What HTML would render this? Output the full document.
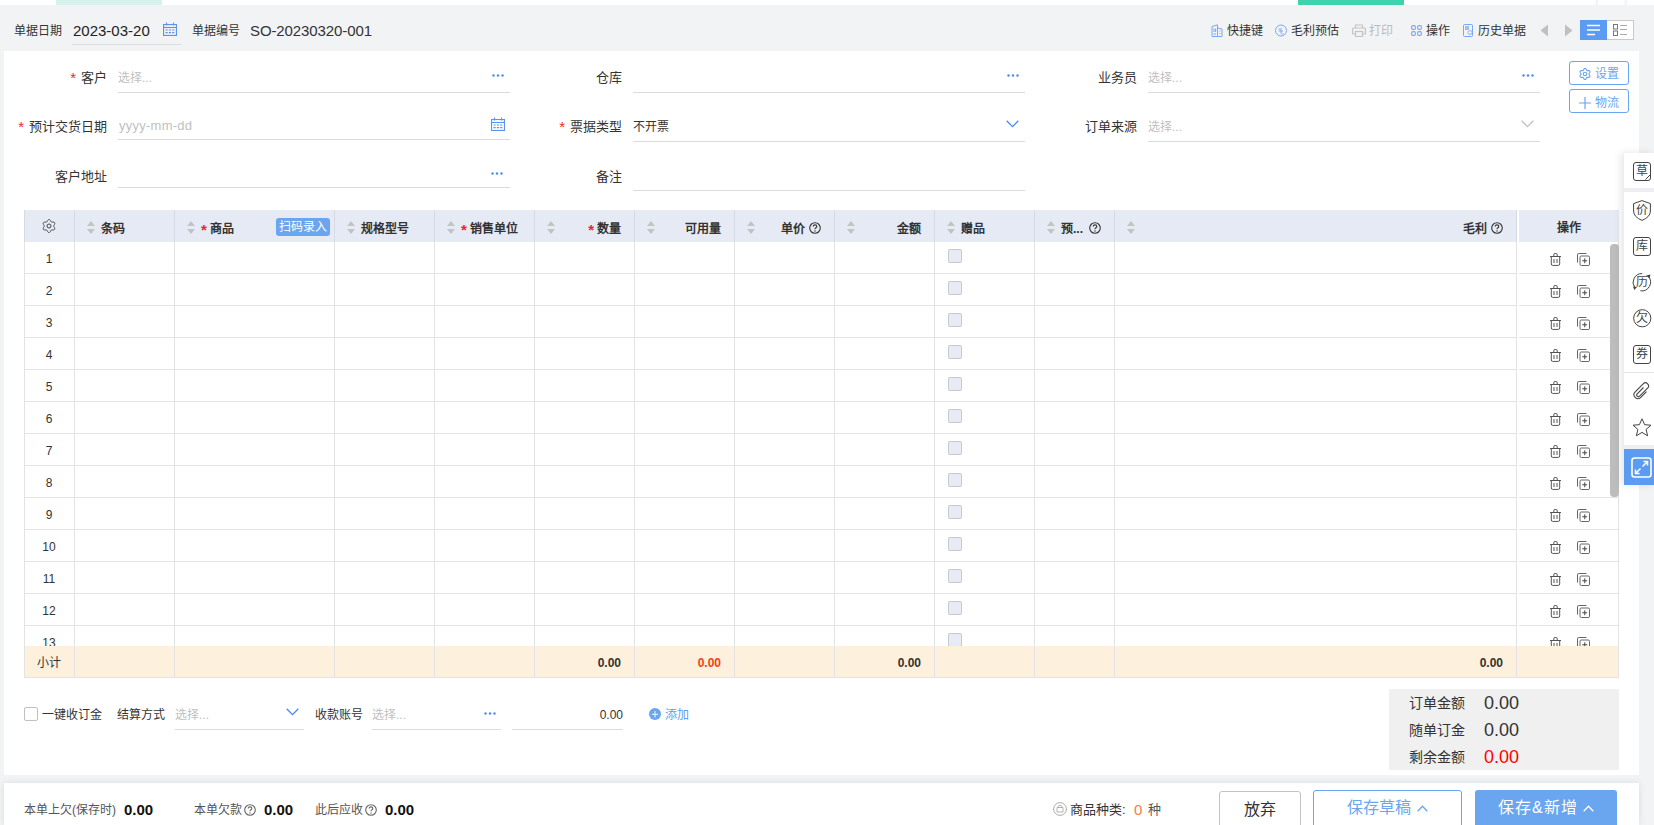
<!DOCTYPE html><html lang="zh-CN"><head><meta charset="utf-8"><style>
*{box-sizing:border-box;margin:0;padding:0}
html,body{width:1654px;height:825px;overflow:hidden}
body{background:#f2f3f5;font-family:"Liberation Sans",sans-serif;font-size:12px;color:#333;position:relative}
.a{position:absolute;white-space:nowrap}
.lbl{font-size:12px;color:#333;line-height:16px}
.r{text-align:right}
.req{color:#f5222d;margin-right:5px;font-size:15px;vertical-align:-1px}
.ph{color:#bfbfbf;font-size:12px;line-height:16px}
.ul{height:1px;background:#dcdcdc}
.tb{font-size:12px;color:#333;line-height:16px}
.hd{font-size:12px;font-weight:bold;color:#333;line-height:16px}
.cell{font-size:12px;color:#333;line-height:16px}
</style></head><body>
<div class="a " style="left:0px;top:0px;width:1654px;height:5px;background:#fff"></div>
<div class="a " style="left:56px;top:0px;width:106px;height:5px;background:#d5f3ec"></div>
<div class="a " style="left:1298px;top:0px;width:106px;height:5px;background:#3dd3ad"></div>
<div class="a " style="left:1594px;top:0px;width:4px;height:5px;background:linear-gradient(to right,rgba(0,0,0,0),rgba(0,0,0,0.06))"></div>
<div class="a " style="left:1623px;top:0px;width:4px;height:5px;background:linear-gradient(to right,rgba(0,0,0,0),rgba(0,0,0,0.06))"></div>
<div class="a lbl" style="left:14px;top:23px;">单据日期</div>
<div class="a " style="left:73px;top:21px;font-size:15px;line-height:20px;color:#222">2023-03-20</div>
<div class="a ul" style="left:72px;top:44px;width:109px;height:1px;"></div>
<svg class="a" style="left:163px;top:22px" width="14" height="14" viewBox="0 0 14 14"><g fill="none" stroke="#5a93ee" stroke-width="1.1"><rect x="0.55" y="2.55" width="12.9" height="10.9"/><line x1="0.5" y1="5.5" x2="13.5" y2="5.5"/><line x1="3.5" y1="0.5" x2="3.5" y2="3.5"/><line x1="10.5" y1="0.5" x2="10.5" y2="3.5"/><line x1="2.5" y1="8" x2="11.5" y2="8" stroke-dasharray="2.2 1.1"/><line x1="2.5" y1="10.6" x2="11.5" y2="10.6" stroke-dasharray="2.2 1.1"/></g></svg>
<div class="a lbl" style="left:192px;top:23px;">单据编号</div>
<div class="a " style="left:250px;top:21px;font-size:15px;line-height:20px;color:#333;letter-spacing:-0.1px">SO-20230320-001</div>
<div class="a tb" style="left:1227px;top:23px;">快捷键</div>
<div class="a tb" style="left:1291px;top:23px;">毛利预估</div>
<div class="a tb" style="left:1369px;top:23px;color:#bbb">打印</div>
<div class="a tb" style="left:1426px;top:23px;">操作</div>
<div class="a tb" style="left:1478px;top:23px;">历史单据</div>
<div class="a " style="left:1580px;top:20px;width:54px;height:20px;border:1px solid #c8c8c8;background:#fff"></div>
<div class="a " style="left:1580px;top:20px;width:27px;height:20px;background:#5b9cf2"></div>
<div class="a " style="left:4px;top:51px;width:1635px;height:724px;background:#fff"></div>
<div class="a lbl r" style="left:-93px;top:69px;width:200px;font-size:13px;line-height:17px"><span class="req">*</span>客户</div>
<div class="a ph" style="left:118px;top:70px;">选择...</div>
<div class="a ul" style="left:118px;top:92px;width:392px;height:1px;"></div>
<div class="a lbl r" style="left:422px;top:69px;width:200px;font-size:13px;line-height:17px">仓库</div>
<div class="a ul" style="left:633px;top:92px;width:392px;height:1px;"></div>
<div class="a lbl r" style="left:937px;top:69px;width:200px;font-size:13px;line-height:17px">业务员</div>
<div class="a ph" style="left:1148px;top:70px;">选择...</div>
<div class="a ul" style="left:1148px;top:92px;width:392px;height:1px;"></div>
<div class="a lbl r" style="left:-93px;top:118px;width:200px;font-size:13px;line-height:17px"><span class="req">*</span>预计交货日期</div>
<div class="a ph" style="left:119px;top:117px;font-size:13px;line-height:17px;letter-spacing:0.25px">yyyy-mm-dd</div>
<div class="a ul" style="left:118px;top:139px;width:392px;height:1px;"></div>
<div class="a lbl r" style="left:422px;top:118px;width:200px;font-size:13px;line-height:17px"><span class="req">*</span>票据类型</div>
<div class="a lbl" style="left:633px;top:119px;">不开票</div>
<div class="a ul" style="left:633px;top:141px;width:392px;height:1px;"></div>
<div class="a lbl r" style="left:937px;top:118px;width:200px;font-size:13px;line-height:17px">订单来源</div>
<div class="a ph" style="left:1148px;top:119px;">选择...</div>
<div class="a ul" style="left:1148px;top:141px;width:392px;height:1px;"></div>
<div class="a lbl r" style="left:-93px;top:168px;width:200px;font-size:13px;line-height:17px">客户地址</div>
<div class="a ul" style="left:118px;top:187px;width:392px;height:1px;"></div>
<div class="a lbl r" style="left:422px;top:168px;width:200px;font-size:13px;line-height:17px">备注</div>
<div class="a ul" style="left:633px;top:190px;width:392px;height:1px;"></div>
<svg class="a" style="left:492px;top:74px" width="12" height="3" viewBox="0 0 12 3"><g fill="#4a8af4"><circle cx="1.5" cy="1.5" r="1.2"/><circle cx="6" cy="1.5" r="1.2"/><circle cx="10.5" cy="1.5" r="1.2"/></g></svg>
<svg class="a" style="left:1007px;top:74px" width="12" height="3" viewBox="0 0 12 3"><g fill="#4a8af4"><circle cx="1.5" cy="1.5" r="1.2"/><circle cx="6" cy="1.5" r="1.2"/><circle cx="10.5" cy="1.5" r="1.2"/></g></svg>
<svg class="a" style="left:1522px;top:74px" width="12" height="3" viewBox="0 0 12 3"><g fill="#4a8af4"><circle cx="1.5" cy="1.5" r="1.2"/><circle cx="6" cy="1.5" r="1.2"/><circle cx="10.5" cy="1.5" r="1.2"/></g></svg>
<svg class="a" style="left:491px;top:172px" width="12" height="3" viewBox="0 0 12 3"><g fill="#4a8af4"><circle cx="1.5" cy="1.5" r="1.2"/><circle cx="6" cy="1.5" r="1.2"/><circle cx="10.5" cy="1.5" r="1.2"/></g></svg>
<svg class="a" style="left:491px;top:117px" width="14" height="14" viewBox="0 0 14 14"><g fill="none" stroke="#5a93ee" stroke-width="1.1"><rect x="0.55" y="2.55" width="12.9" height="10.9"/><line x1="0.5" y1="5.5" x2="13.5" y2="5.5"/><line x1="3.5" y1="0.5" x2="3.5" y2="3.5"/><line x1="10.5" y1="0.5" x2="10.5" y2="3.5"/><line x1="2.5" y1="8" x2="11.5" y2="8" stroke-dasharray="2.2 1.1"/><line x1="2.5" y1="10.6" x2="11.5" y2="10.6" stroke-dasharray="2.2 1.1"/></g></svg>
<svg class="a" style="left:1006px;top:120px" width="13" height="8" viewBox="0 0 13 8"><polyline points="0.7,0.7 6.5,6.6 12.3,0.7" fill="none" stroke="#4a8af4" stroke-width="1.3"/></svg>
<svg class="a" style="left:1521px;top:120px" width="13" height="8" viewBox="0 0 13 8"><polyline points="0.7,0.7 6.5,6.6 12.3,0.7" fill="none" stroke="#c0c0c0" stroke-width="1.3"/></svg>
<div class="a " style="left:1569px;top:61px;width:60px;height:24px;border:1px solid #6aa5f0;border-radius:3px"></div>
<div class="a " style="left:1569px;top:89px;width:60px;height:24px;border:1px solid #6aa5f0;border-radius:3px"></div>
<div class="a " style="left:24px;top:210px;width:1492px;height:32px;background:#e6eaf4"></div>
<div class="a " style="left:1519px;top:210px;width:100px;height:32px;background:#e6eaf4"></div>
<div class="a " style="left:24px;top:646px;width:1595px;height:32px;background:#fdf0dc"></div>
<div class="a " style="left:24px;top:273px;width:1492px;height:1px;background:#e3e3e3"></div>
<div class="a " style="left:1519px;top:273px;width:100px;height:1px;background:#e3e3e3"></div>
<div class="a " style="left:24px;top:305px;width:1492px;height:1px;background:#e3e3e3"></div>
<div class="a " style="left:1519px;top:305px;width:100px;height:1px;background:#e3e3e3"></div>
<div class="a " style="left:24px;top:337px;width:1492px;height:1px;background:#e3e3e3"></div>
<div class="a " style="left:1519px;top:337px;width:100px;height:1px;background:#e3e3e3"></div>
<div class="a " style="left:24px;top:369px;width:1492px;height:1px;background:#e3e3e3"></div>
<div class="a " style="left:1519px;top:369px;width:100px;height:1px;background:#e3e3e3"></div>
<div class="a " style="left:24px;top:401px;width:1492px;height:1px;background:#e3e3e3"></div>
<div class="a " style="left:1519px;top:401px;width:100px;height:1px;background:#e3e3e3"></div>
<div class="a " style="left:24px;top:433px;width:1492px;height:1px;background:#e3e3e3"></div>
<div class="a " style="left:1519px;top:433px;width:100px;height:1px;background:#e3e3e3"></div>
<div class="a " style="left:24px;top:465px;width:1492px;height:1px;background:#e3e3e3"></div>
<div class="a " style="left:1519px;top:465px;width:100px;height:1px;background:#e3e3e3"></div>
<div class="a " style="left:24px;top:497px;width:1492px;height:1px;background:#e3e3e3"></div>
<div class="a " style="left:1519px;top:497px;width:100px;height:1px;background:#e3e3e3"></div>
<div class="a " style="left:24px;top:529px;width:1492px;height:1px;background:#e3e3e3"></div>
<div class="a " style="left:1519px;top:529px;width:100px;height:1px;background:#e3e3e3"></div>
<div class="a " style="left:24px;top:561px;width:1492px;height:1px;background:#e3e3e3"></div>
<div class="a " style="left:1519px;top:561px;width:100px;height:1px;background:#e3e3e3"></div>
<div class="a " style="left:24px;top:593px;width:1492px;height:1px;background:#e3e3e3"></div>
<div class="a " style="left:1519px;top:593px;width:100px;height:1px;background:#e3e3e3"></div>
<div class="a " style="left:24px;top:625px;width:1492px;height:1px;background:#e3e3e3"></div>
<div class="a " style="left:1519px;top:625px;width:100px;height:1px;background:#e3e3e3"></div>
<div class="a " style="left:24px;top:677px;width:1595px;height:1px;background:#e3e3e3"></div>
<div class="a " style="left:24px;top:210px;width:1px;height:468px;background:#e3e3e3"></div>
<div class="a " style="left:74px;top:210px;width:1px;height:468px;background:#e3e3e3"></div>
<div class="a " style="left:174px;top:210px;width:1px;height:468px;background:#e3e3e3"></div>
<div class="a " style="left:334px;top:210px;width:1px;height:468px;background:#e3e3e3"></div>
<div class="a " style="left:434px;top:210px;width:1px;height:468px;background:#e3e3e3"></div>
<div class="a " style="left:534px;top:210px;width:1px;height:468px;background:#e3e3e3"></div>
<div class="a " style="left:634px;top:210px;width:1px;height:468px;background:#e3e3e3"></div>
<div class="a " style="left:734px;top:210px;width:1px;height:468px;background:#e3e3e3"></div>
<div class="a " style="left:834px;top:210px;width:1px;height:468px;background:#e3e3e3"></div>
<div class="a " style="left:934px;top:210px;width:1px;height:468px;background:#e3e3e3"></div>
<div class="a " style="left:1034px;top:210px;width:1px;height:468px;background:#e3e3e3"></div>
<div class="a " style="left:1114px;top:210px;width:1px;height:468px;background:#e3e3e3"></div>
<div class="a " style="left:1516px;top:210px;width:1px;height:468px;background:#e3e3e3"></div>
<div class="a " style="left:74px;top:210px;width:1px;height:32px;background:#d6dae3"></div>
<div class="a " style="left:174px;top:210px;width:1px;height:32px;background:#d6dae3"></div>
<div class="a " style="left:334px;top:210px;width:1px;height:32px;background:#d6dae3"></div>
<div class="a " style="left:434px;top:210px;width:1px;height:32px;background:#d6dae3"></div>
<div class="a " style="left:534px;top:210px;width:1px;height:32px;background:#d6dae3"></div>
<div class="a " style="left:634px;top:210px;width:1px;height:32px;background:#d6dae3"></div>
<div class="a " style="left:734px;top:210px;width:1px;height:32px;background:#d6dae3"></div>
<div class="a " style="left:834px;top:210px;width:1px;height:32px;background:#d6dae3"></div>
<div class="a " style="left:934px;top:210px;width:1px;height:32px;background:#d6dae3"></div>
<div class="a " style="left:1034px;top:210px;width:1px;height:32px;background:#d6dae3"></div>
<div class="a " style="left:1114px;top:210px;width:1px;height:32px;background:#d6dae3"></div>
<div class="a " style="left:1516px;top:210px;width:1px;height:32px;background:#d6dae3"></div>
<div class="a " style="left:24px;top:210px;width:1px;height:32px;background:#d6dae3"></div>
<svg class="a" style="left:42px;top:219px" width="14" height="14" viewBox="0 0 14 14"><g fill="none" stroke="#444" stroke-width="1"><path d="M7.00 0.45 L7.34 0.51 L7.67 0.67 L7.96 0.92 L8.23 1.24 L8.45 1.59 L8.64 1.95 L8.81 2.29 L8.97 2.59 L9.13 2.82 L9.32 2.97 L9.56 3.06 L9.84 3.09 L10.17 3.08 L10.55 3.06 L10.96 3.04 L11.38 3.06 L11.79 3.12 L12.15 3.26 L12.45 3.46 L12.67 3.73 L12.79 4.05 L12.82 4.41 L12.75 4.79 L12.61 5.18 L12.41 5.55 L12.19 5.90 L11.98 6.21 L11.80 6.49 L11.69 6.75 L11.65 7.00 L11.69 7.25 L11.80 7.51 L11.98 7.79 L12.19 8.10 L12.41 8.45 L12.61 8.82 L12.75 9.21 L12.82 9.59 L12.79 9.95 L12.67 10.27 L12.45 10.54 L12.15 10.74 L11.79 10.88 L11.38 10.94 L10.96 10.96 L10.55 10.94 L10.17 10.92 L9.84 10.91 L9.56 10.94 L9.32 11.03 L9.13 11.18 L8.97 11.41 L8.81 11.71 L8.64 12.05 L8.45 12.41 L8.23 12.76 L7.96 13.08 L7.67 13.33 L7.34 13.49 L7.00 13.55 L6.66 13.49 L6.33 13.33 L6.04 13.08 L5.77 12.76 L5.55 12.41 L5.36 12.05 L5.19 11.71 L5.03 11.41 L4.87 11.18 L4.68 11.03 L4.44 10.94 L4.16 10.91 L3.83 10.92 L3.45 10.94 L3.04 10.96 L2.62 10.94 L2.21 10.88 L1.85 10.74 L1.55 10.54 L1.33 10.28 L1.21 9.95 L1.18 9.59 L1.25 9.21 L1.39 8.82 L1.59 8.45 L1.81 8.10 L2.02 7.79 L2.20 7.51 L2.31 7.25 L2.35 7.00 L2.31 6.75 L2.20 6.49 L2.02 6.21 L1.81 5.90 L1.59 5.55 L1.39 5.18 L1.25 4.79 L1.18 4.41 L1.21 4.05 L1.33 3.72 L1.55 3.46 L1.85 3.26 L2.21 3.12 L2.62 3.06 L3.04 3.04 L3.45 3.06 L3.83 3.08 L4.16 3.09 L4.44 3.06 L4.68 2.97 L4.87 2.82 L5.03 2.59 L5.19 2.29 L5.36 1.95 L5.55 1.59 L5.77 1.24 L6.04 0.92 L6.33 0.67 L6.66 0.51 L7.00 0.45Z"/><circle cx="7" cy="7" r="2"/></g></svg>
<svg class="a" style="left:87px;top:221px" width="8" height="13" viewBox="0 0 8 13"><g fill="#c3c3c3"><polygon points="4,0 8,5 0,5"/><polygon points="0,8 8,8 4,13"/></g></svg>
<div class="a hd" style="left:101px;top:221px;">条码</div>
<svg class="a" style="left:187px;top:221px" width="8" height="13" viewBox="0 0 8 13"><g fill="#c3c3c3"><polygon points="4,0 8,5 0,5"/><polygon points="0,8 8,8 4,13"/></g></svg>
<div class="a hd" style="left:201px;top:221px;"><span style="color:#f5222d;margin-right:3px;font-size:15px;vertical-align:-2px">*</span>商品</div>
<svg class="a" style="left:347px;top:221px" width="8" height="13" viewBox="0 0 8 13"><g fill="#c3c3c3"><polygon points="4,0 8,5 0,5"/><polygon points="0,8 8,8 4,13"/></g></svg>
<div class="a hd" style="left:361px;top:221px;">规格型号</div>
<svg class="a" style="left:447px;top:221px" width="8" height="13" viewBox="0 0 8 13"><g fill="#c3c3c3"><polygon points="4,0 8,5 0,5"/><polygon points="0,8 8,8 4,13"/></g></svg>
<div class="a hd" style="left:461px;top:221px;"><span style="color:#f5222d;margin-right:3px;font-size:15px;vertical-align:-2px">*</span>销售单位</div>
<div class="a " style="left:276px;top:218px;width:54px;height:18px;background:#6aa5f0;border-radius:3px;color:#fff;font-size:12px;line-height:17px;padding-top:1px;text-align:center">扫码录入</div>
<svg class="a" style="left:547px;top:221px" width="8" height="13" viewBox="0 0 8 13"><g fill="#c3c3c3"><polygon points="4,0 8,5 0,5"/><polygon points="0,8 8,8 4,13"/></g></svg>
<div class="a hd r" style="left:471px;top:221px;width:150px;"><span style="color:#f5222d;margin-right:3px;font-size:15px;vertical-align:-2px">*</span>数量</div>
<svg class="a" style="left:647px;top:221px" width="8" height="13" viewBox="0 0 8 13"><g fill="#c3c3c3"><polygon points="4,0 8,5 0,5"/><polygon points="0,8 8,8 4,13"/></g></svg>
<div class="a hd r" style="left:571px;top:221px;width:150px;">可用量</div>
<svg class="a" style="left:747px;top:221px" width="8" height="13" viewBox="0 0 8 13"><g fill="#c3c3c3"><polygon points="4,0 8,5 0,5"/><polygon points="0,8 8,8 4,13"/></g></svg>
<div class="a hd r" style="left:655px;top:221px;width:150px;">单价</div>
<svg class="a" style="left:809px;top:222px" width="12" height="12" viewBox="0 0 12 12"><circle cx="6" cy="6" r="5.3" fill="none" stroke="#333" stroke-width="1.1"/><path d="M4.2 4.6 Q4.2 2.9 6 2.9 Q7.8 2.9 7.8 4.5 Q7.8 5.5 6.6 6 Q6 6.3 6 7.3" fill="none" stroke="#333" stroke-width="1.1"/><circle cx="6" cy="9" r="0.7" fill="#333"/></svg>
<svg class="a" style="left:847px;top:221px" width="8" height="13" viewBox="0 0 8 13"><g fill="#c3c3c3"><polygon points="4,0 8,5 0,5"/><polygon points="0,8 8,8 4,13"/></g></svg>
<div class="a hd r" style="left:771px;top:221px;width:150px;">金额</div>
<svg class="a" style="left:947px;top:221px" width="8" height="13" viewBox="0 0 8 13"><g fill="#c3c3c3"><polygon points="4,0 8,5 0,5"/><polygon points="0,8 8,8 4,13"/></g></svg>
<div class="a hd" style="left:961px;top:221px;">赠品</div>
<svg class="a" style="left:1047px;top:221px" width="8" height="13" viewBox="0 0 8 13"><g fill="#c3c3c3"><polygon points="4,0 8,5 0,5"/><polygon points="0,8 8,8 4,13"/></g></svg>
<div class="a hd" style="left:1061px;top:221px;">预...</div>
<svg class="a" style="left:1089px;top:222px" width="12" height="12" viewBox="0 0 12 12"><circle cx="6" cy="6" r="5.3" fill="none" stroke="#333" stroke-width="1.1"/><path d="M4.2 4.6 Q4.2 2.9 6 2.9 Q7.8 2.9 7.8 4.5 Q7.8 5.5 6.6 6 Q6 6.3 6 7.3" fill="none" stroke="#333" stroke-width="1.1"/><circle cx="6" cy="9" r="0.7" fill="#333"/></svg>
<svg class="a" style="left:1127px;top:221px" width="8" height="13" viewBox="0 0 8 13"><g fill="#c3c3c3"><polygon points="4,0 8,5 0,5"/><polygon points="0,8 8,8 4,13"/></g></svg>
<div class="a hd r" style="left:1337px;top:221px;width:150px;">毛利</div>
<svg class="a" style="left:1491px;top:222px" width="12" height="12" viewBox="0 0 12 12"><circle cx="6" cy="6" r="5.3" fill="none" stroke="#333" stroke-width="1.1"/><path d="M4.2 4.6 Q4.2 2.9 6 2.9 Q7.8 2.9 7.8 4.5 Q7.8 5.5 6.6 6 Q6 6.3 6 7.3" fill="none" stroke="#333" stroke-width="1.1"/><circle cx="6" cy="9" r="0.7" fill="#333"/></svg>
<div class="a hd" style="left:1519px;top:220px;width:100px;text-align:center">操作</div>
<div class="a cell" style="left:24px;top:251px;width:50px;text-align:center">1</div>
<div class="a " style="left:948px;top:249px;width:14px;height:14px;background:#e7ebf5;border:1px solid #c8c9cc;border-radius:2px"></div>
<svg class="a" style="left:1550px;top:253px" width="11" height="13" viewBox="0 0 11 13"><g fill="none" stroke="#555" stroke-width="1"><line x1="0" y1="3.5" x2="11" y2="3.5"/><path d="M3.8 3.5 V1.2 Q3.8 0.6 4.5 0.6 H6.5 Q7.2 0.6 7.2 1.2 V3.5"/><path d="M1.3 3.5 V11 Q1.3 12.4 2.7 12.4 H8.3 Q9.7 12.4 9.7 11 V3.5"/><line x1="4" y1="6" x2="4" y2="10"/><line x1="7" y1="6" x2="7" y2="10"/></g></svg>
<svg class="a" style="left:1577px;top:253px" width="13" height="13" viewBox="0 0 13 13"><g fill="none" stroke="#666" stroke-width="1"><path d="M0.5 9.5 V1.8 Q0.5 0.5 1.8 0.5 H9.5"/><rect x="3" y="3" width="9.5" height="9.5" rx="1.3" fill="#fff"/><path d="M5.3 7.75 H10.2 M7.75 5.3 V10.2" stroke="#444"/></g></svg>
<div class="a cell" style="left:24px;top:283px;width:50px;text-align:center">2</div>
<div class="a " style="left:948px;top:281px;width:14px;height:14px;background:#e7ebf5;border:1px solid #c8c9cc;border-radius:2px"></div>
<svg class="a" style="left:1550px;top:285px" width="11" height="13" viewBox="0 0 11 13"><g fill="none" stroke="#555" stroke-width="1"><line x1="0" y1="3.5" x2="11" y2="3.5"/><path d="M3.8 3.5 V1.2 Q3.8 0.6 4.5 0.6 H6.5 Q7.2 0.6 7.2 1.2 V3.5"/><path d="M1.3 3.5 V11 Q1.3 12.4 2.7 12.4 H8.3 Q9.7 12.4 9.7 11 V3.5"/><line x1="4" y1="6" x2="4" y2="10"/><line x1="7" y1="6" x2="7" y2="10"/></g></svg>
<svg class="a" style="left:1577px;top:285px" width="13" height="13" viewBox="0 0 13 13"><g fill="none" stroke="#666" stroke-width="1"><path d="M0.5 9.5 V1.8 Q0.5 0.5 1.8 0.5 H9.5"/><rect x="3" y="3" width="9.5" height="9.5" rx="1.3" fill="#fff"/><path d="M5.3 7.75 H10.2 M7.75 5.3 V10.2" stroke="#444"/></g></svg>
<div class="a cell" style="left:24px;top:315px;width:50px;text-align:center">3</div>
<div class="a " style="left:948px;top:313px;width:14px;height:14px;background:#e7ebf5;border:1px solid #c8c9cc;border-radius:2px"></div>
<svg class="a" style="left:1550px;top:317px" width="11" height="13" viewBox="0 0 11 13"><g fill="none" stroke="#555" stroke-width="1"><line x1="0" y1="3.5" x2="11" y2="3.5"/><path d="M3.8 3.5 V1.2 Q3.8 0.6 4.5 0.6 H6.5 Q7.2 0.6 7.2 1.2 V3.5"/><path d="M1.3 3.5 V11 Q1.3 12.4 2.7 12.4 H8.3 Q9.7 12.4 9.7 11 V3.5"/><line x1="4" y1="6" x2="4" y2="10"/><line x1="7" y1="6" x2="7" y2="10"/></g></svg>
<svg class="a" style="left:1577px;top:317px" width="13" height="13" viewBox="0 0 13 13"><g fill="none" stroke="#666" stroke-width="1"><path d="M0.5 9.5 V1.8 Q0.5 0.5 1.8 0.5 H9.5"/><rect x="3" y="3" width="9.5" height="9.5" rx="1.3" fill="#fff"/><path d="M5.3 7.75 H10.2 M7.75 5.3 V10.2" stroke="#444"/></g></svg>
<div class="a cell" style="left:24px;top:347px;width:50px;text-align:center">4</div>
<div class="a " style="left:948px;top:345px;width:14px;height:14px;background:#e7ebf5;border:1px solid #c8c9cc;border-radius:2px"></div>
<svg class="a" style="left:1550px;top:349px" width="11" height="13" viewBox="0 0 11 13"><g fill="none" stroke="#555" stroke-width="1"><line x1="0" y1="3.5" x2="11" y2="3.5"/><path d="M3.8 3.5 V1.2 Q3.8 0.6 4.5 0.6 H6.5 Q7.2 0.6 7.2 1.2 V3.5"/><path d="M1.3 3.5 V11 Q1.3 12.4 2.7 12.4 H8.3 Q9.7 12.4 9.7 11 V3.5"/><line x1="4" y1="6" x2="4" y2="10"/><line x1="7" y1="6" x2="7" y2="10"/></g></svg>
<svg class="a" style="left:1577px;top:349px" width="13" height="13" viewBox="0 0 13 13"><g fill="none" stroke="#666" stroke-width="1"><path d="M0.5 9.5 V1.8 Q0.5 0.5 1.8 0.5 H9.5"/><rect x="3" y="3" width="9.5" height="9.5" rx="1.3" fill="#fff"/><path d="M5.3 7.75 H10.2 M7.75 5.3 V10.2" stroke="#444"/></g></svg>
<div class="a cell" style="left:24px;top:379px;width:50px;text-align:center">5</div>
<div class="a " style="left:948px;top:377px;width:14px;height:14px;background:#e7ebf5;border:1px solid #c8c9cc;border-radius:2px"></div>
<svg class="a" style="left:1550px;top:381px" width="11" height="13" viewBox="0 0 11 13"><g fill="none" stroke="#555" stroke-width="1"><line x1="0" y1="3.5" x2="11" y2="3.5"/><path d="M3.8 3.5 V1.2 Q3.8 0.6 4.5 0.6 H6.5 Q7.2 0.6 7.2 1.2 V3.5"/><path d="M1.3 3.5 V11 Q1.3 12.4 2.7 12.4 H8.3 Q9.7 12.4 9.7 11 V3.5"/><line x1="4" y1="6" x2="4" y2="10"/><line x1="7" y1="6" x2="7" y2="10"/></g></svg>
<svg class="a" style="left:1577px;top:381px" width="13" height="13" viewBox="0 0 13 13"><g fill="none" stroke="#666" stroke-width="1"><path d="M0.5 9.5 V1.8 Q0.5 0.5 1.8 0.5 H9.5"/><rect x="3" y="3" width="9.5" height="9.5" rx="1.3" fill="#fff"/><path d="M5.3 7.75 H10.2 M7.75 5.3 V10.2" stroke="#444"/></g></svg>
<div class="a cell" style="left:24px;top:411px;width:50px;text-align:center">6</div>
<div class="a " style="left:948px;top:409px;width:14px;height:14px;background:#e7ebf5;border:1px solid #c8c9cc;border-radius:2px"></div>
<svg class="a" style="left:1550px;top:413px" width="11" height="13" viewBox="0 0 11 13"><g fill="none" stroke="#555" stroke-width="1"><line x1="0" y1="3.5" x2="11" y2="3.5"/><path d="M3.8 3.5 V1.2 Q3.8 0.6 4.5 0.6 H6.5 Q7.2 0.6 7.2 1.2 V3.5"/><path d="M1.3 3.5 V11 Q1.3 12.4 2.7 12.4 H8.3 Q9.7 12.4 9.7 11 V3.5"/><line x1="4" y1="6" x2="4" y2="10"/><line x1="7" y1="6" x2="7" y2="10"/></g></svg>
<svg class="a" style="left:1577px;top:413px" width="13" height="13" viewBox="0 0 13 13"><g fill="none" stroke="#666" stroke-width="1"><path d="M0.5 9.5 V1.8 Q0.5 0.5 1.8 0.5 H9.5"/><rect x="3" y="3" width="9.5" height="9.5" rx="1.3" fill="#fff"/><path d="M5.3 7.75 H10.2 M7.75 5.3 V10.2" stroke="#444"/></g></svg>
<div class="a cell" style="left:24px;top:443px;width:50px;text-align:center">7</div>
<div class="a " style="left:948px;top:441px;width:14px;height:14px;background:#e7ebf5;border:1px solid #c8c9cc;border-radius:2px"></div>
<svg class="a" style="left:1550px;top:445px" width="11" height="13" viewBox="0 0 11 13"><g fill="none" stroke="#555" stroke-width="1"><line x1="0" y1="3.5" x2="11" y2="3.5"/><path d="M3.8 3.5 V1.2 Q3.8 0.6 4.5 0.6 H6.5 Q7.2 0.6 7.2 1.2 V3.5"/><path d="M1.3 3.5 V11 Q1.3 12.4 2.7 12.4 H8.3 Q9.7 12.4 9.7 11 V3.5"/><line x1="4" y1="6" x2="4" y2="10"/><line x1="7" y1="6" x2="7" y2="10"/></g></svg>
<svg class="a" style="left:1577px;top:445px" width="13" height="13" viewBox="0 0 13 13"><g fill="none" stroke="#666" stroke-width="1"><path d="M0.5 9.5 V1.8 Q0.5 0.5 1.8 0.5 H9.5"/><rect x="3" y="3" width="9.5" height="9.5" rx="1.3" fill="#fff"/><path d="M5.3 7.75 H10.2 M7.75 5.3 V10.2" stroke="#444"/></g></svg>
<div class="a cell" style="left:24px;top:475px;width:50px;text-align:center">8</div>
<div class="a " style="left:948px;top:473px;width:14px;height:14px;background:#e7ebf5;border:1px solid #c8c9cc;border-radius:2px"></div>
<svg class="a" style="left:1550px;top:477px" width="11" height="13" viewBox="0 0 11 13"><g fill="none" stroke="#555" stroke-width="1"><line x1="0" y1="3.5" x2="11" y2="3.5"/><path d="M3.8 3.5 V1.2 Q3.8 0.6 4.5 0.6 H6.5 Q7.2 0.6 7.2 1.2 V3.5"/><path d="M1.3 3.5 V11 Q1.3 12.4 2.7 12.4 H8.3 Q9.7 12.4 9.7 11 V3.5"/><line x1="4" y1="6" x2="4" y2="10"/><line x1="7" y1="6" x2="7" y2="10"/></g></svg>
<svg class="a" style="left:1577px;top:477px" width="13" height="13" viewBox="0 0 13 13"><g fill="none" stroke="#666" stroke-width="1"><path d="M0.5 9.5 V1.8 Q0.5 0.5 1.8 0.5 H9.5"/><rect x="3" y="3" width="9.5" height="9.5" rx="1.3" fill="#fff"/><path d="M5.3 7.75 H10.2 M7.75 5.3 V10.2" stroke="#444"/></g></svg>
<div class="a cell" style="left:24px;top:507px;width:50px;text-align:center">9</div>
<div class="a " style="left:948px;top:505px;width:14px;height:14px;background:#e7ebf5;border:1px solid #c8c9cc;border-radius:2px"></div>
<svg class="a" style="left:1550px;top:509px" width="11" height="13" viewBox="0 0 11 13"><g fill="none" stroke="#555" stroke-width="1"><line x1="0" y1="3.5" x2="11" y2="3.5"/><path d="M3.8 3.5 V1.2 Q3.8 0.6 4.5 0.6 H6.5 Q7.2 0.6 7.2 1.2 V3.5"/><path d="M1.3 3.5 V11 Q1.3 12.4 2.7 12.4 H8.3 Q9.7 12.4 9.7 11 V3.5"/><line x1="4" y1="6" x2="4" y2="10"/><line x1="7" y1="6" x2="7" y2="10"/></g></svg>
<svg class="a" style="left:1577px;top:509px" width="13" height="13" viewBox="0 0 13 13"><g fill="none" stroke="#666" stroke-width="1"><path d="M0.5 9.5 V1.8 Q0.5 0.5 1.8 0.5 H9.5"/><rect x="3" y="3" width="9.5" height="9.5" rx="1.3" fill="#fff"/><path d="M5.3 7.75 H10.2 M7.75 5.3 V10.2" stroke="#444"/></g></svg>
<div class="a cell" style="left:24px;top:539px;width:50px;text-align:center">10</div>
<div class="a " style="left:948px;top:537px;width:14px;height:14px;background:#e7ebf5;border:1px solid #c8c9cc;border-radius:2px"></div>
<svg class="a" style="left:1550px;top:541px" width="11" height="13" viewBox="0 0 11 13"><g fill="none" stroke="#555" stroke-width="1"><line x1="0" y1="3.5" x2="11" y2="3.5"/><path d="M3.8 3.5 V1.2 Q3.8 0.6 4.5 0.6 H6.5 Q7.2 0.6 7.2 1.2 V3.5"/><path d="M1.3 3.5 V11 Q1.3 12.4 2.7 12.4 H8.3 Q9.7 12.4 9.7 11 V3.5"/><line x1="4" y1="6" x2="4" y2="10"/><line x1="7" y1="6" x2="7" y2="10"/></g></svg>
<svg class="a" style="left:1577px;top:541px" width="13" height="13" viewBox="0 0 13 13"><g fill="none" stroke="#666" stroke-width="1"><path d="M0.5 9.5 V1.8 Q0.5 0.5 1.8 0.5 H9.5"/><rect x="3" y="3" width="9.5" height="9.5" rx="1.3" fill="#fff"/><path d="M5.3 7.75 H10.2 M7.75 5.3 V10.2" stroke="#444"/></g></svg>
<div class="a cell" style="left:24px;top:571px;width:50px;text-align:center">11</div>
<div class="a " style="left:948px;top:569px;width:14px;height:14px;background:#e7ebf5;border:1px solid #c8c9cc;border-radius:2px"></div>
<svg class="a" style="left:1550px;top:573px" width="11" height="13" viewBox="0 0 11 13"><g fill="none" stroke="#555" stroke-width="1"><line x1="0" y1="3.5" x2="11" y2="3.5"/><path d="M3.8 3.5 V1.2 Q3.8 0.6 4.5 0.6 H6.5 Q7.2 0.6 7.2 1.2 V3.5"/><path d="M1.3 3.5 V11 Q1.3 12.4 2.7 12.4 H8.3 Q9.7 12.4 9.7 11 V3.5"/><line x1="4" y1="6" x2="4" y2="10"/><line x1="7" y1="6" x2="7" y2="10"/></g></svg>
<svg class="a" style="left:1577px;top:573px" width="13" height="13" viewBox="0 0 13 13"><g fill="none" stroke="#666" stroke-width="1"><path d="M0.5 9.5 V1.8 Q0.5 0.5 1.8 0.5 H9.5"/><rect x="3" y="3" width="9.5" height="9.5" rx="1.3" fill="#fff"/><path d="M5.3 7.75 H10.2 M7.75 5.3 V10.2" stroke="#444"/></g></svg>
<div class="a cell" style="left:24px;top:603px;width:50px;text-align:center">12</div>
<div class="a " style="left:948px;top:601px;width:14px;height:14px;background:#e7ebf5;border:1px solid #c8c9cc;border-radius:2px"></div>
<svg class="a" style="left:1550px;top:605px" width="11" height="13" viewBox="0 0 11 13"><g fill="none" stroke="#555" stroke-width="1"><line x1="0" y1="3.5" x2="11" y2="3.5"/><path d="M3.8 3.5 V1.2 Q3.8 0.6 4.5 0.6 H6.5 Q7.2 0.6 7.2 1.2 V3.5"/><path d="M1.3 3.5 V11 Q1.3 12.4 2.7 12.4 H8.3 Q9.7 12.4 9.7 11 V3.5"/><line x1="4" y1="6" x2="4" y2="10"/><line x1="7" y1="6" x2="7" y2="10"/></g></svg>
<svg class="a" style="left:1577px;top:605px" width="13" height="13" viewBox="0 0 13 13"><g fill="none" stroke="#666" stroke-width="1"><path d="M0.5 9.5 V1.8 Q0.5 0.5 1.8 0.5 H9.5"/><rect x="3" y="3" width="9.5" height="9.5" rx="1.3" fill="#fff"/><path d="M5.3 7.75 H10.2 M7.75 5.3 V10.2" stroke="#444"/></g></svg>
<div class="a cell" style="left:24px;top:635px;width:50px;text-align:center">13</div>
<div class="a " style="left:948px;top:633px;width:14px;height:14px;background:#e7ebf5;border:1px solid #c8c9cc;border-radius:2px"></div>
<svg class="a" style="left:1550px;top:637px" width="11" height="13" viewBox="0 0 11 13"><g fill="none" stroke="#555" stroke-width="1"><line x1="0" y1="3.5" x2="11" y2="3.5"/><path d="M3.8 3.5 V1.2 Q3.8 0.6 4.5 0.6 H6.5 Q7.2 0.6 7.2 1.2 V3.5"/><path d="M1.3 3.5 V11 Q1.3 12.4 2.7 12.4 H8.3 Q9.7 12.4 9.7 11 V3.5"/><line x1="4" y1="6" x2="4" y2="10"/><line x1="7" y1="6" x2="7" y2="10"/></g></svg>
<svg class="a" style="left:1577px;top:637px" width="13" height="13" viewBox="0 0 13 13"><g fill="none" stroke="#666" stroke-width="1"><path d="M0.5 9.5 V1.8 Q0.5 0.5 1.8 0.5 H9.5"/><rect x="3" y="3" width="9.5" height="9.5" rx="1.3" fill="#fff"/><path d="M5.3 7.75 H10.2 M7.75 5.3 V10.2" stroke="#444"/></g></svg>
<div class="a " style="left:24px;top:646px;width:1595px;height:31px;background:#fdf0dc"></div>
<div class="a " style="left:24px;top:646px;width:1px;height:32px;background:#e3e3e3"></div>
<div class="a " style="left:74px;top:646px;width:1px;height:32px;background:#e3e3e3"></div>
<div class="a " style="left:174px;top:646px;width:1px;height:32px;background:#e3e3e3"></div>
<div class="a " style="left:334px;top:646px;width:1px;height:32px;background:#e3e3e3"></div>
<div class="a " style="left:434px;top:646px;width:1px;height:32px;background:#e3e3e3"></div>
<div class="a " style="left:534px;top:646px;width:1px;height:32px;background:#e3e3e3"></div>
<div class="a " style="left:634px;top:646px;width:1px;height:32px;background:#e3e3e3"></div>
<div class="a " style="left:734px;top:646px;width:1px;height:32px;background:#e3e3e3"></div>
<div class="a " style="left:834px;top:646px;width:1px;height:32px;background:#e3e3e3"></div>
<div class="a " style="left:934px;top:646px;width:1px;height:32px;background:#e3e3e3"></div>
<div class="a " style="left:1034px;top:646px;width:1px;height:32px;background:#e3e3e3"></div>
<div class="a " style="left:1114px;top:646px;width:1px;height:32px;background:#e3e3e3"></div>
<div class="a " style="left:1516px;top:646px;width:1px;height:32px;background:#e3e3e3"></div>
<div class="a cell" style="left:24px;top:655px;width:50px;text-align:center">小计</div>
<div class="a hd r" style="left:521px;top:655px;width:100px;">0.00</div>
<div class="a hd r" style="left:621px;top:655px;width:100px;color:#fa3c14">0.00</div>
<div class="a hd r" style="left:821px;top:655px;width:100px;">0.00</div>
<div class="a hd r" style="left:1403px;top:655px;width:100px;">0.00</div>
<div class="a " style="left:1618px;top:242px;width:1px;height:436px;background:#e3e3e3"></div>
<div class="a " style="left:1610px;top:244px;width:9px;height:253px;background:#bdbdbd;border-radius:4px"></div>
<div class="a " style="left:24px;top:707px;width:14px;height:14px;border:1px solid #c0c0c0;border-radius:2px;background:#fff"></div>
<div class="a lbl" style="left:42px;top:707px;">一键收订金</div>
<div class="a lbl" style="left:117px;top:707px;">结算方式</div>
<div class="a ph" style="left:175px;top:707px;">选择...</div>
<svg class="a" style="left:286px;top:708px" width="13" height="8" viewBox="0 0 13 8"><polyline points="0.7,0.7 6.5,6.6 12.3,0.7" fill="none" stroke="#4a8af4" stroke-width="1.3"/></svg>
<div class="a ul" style="left:175px;top:729px;width:129px;height:1px;"></div>
<div class="a lbl" style="left:315px;top:707px;">收款账号</div>
<div class="a ph" style="left:372px;top:707px;">选择...</div>
<svg class="a" style="left:484px;top:712px" width="12" height="3" viewBox="0 0 12 3"><g fill="#4a8af4"><circle cx="1.5" cy="1.5" r="1.2"/><circle cx="6" cy="1.5" r="1.2"/><circle cx="10.5" cy="1.5" r="1.2"/></g></svg>
<div class="a ul" style="left:372px;top:729px;width:129px;height:1px;"></div>
<div class="a lbl r" style="left:523px;top:707px;width:100px;">0.00</div>
<div class="a ul" style="left:512px;top:729px;width:111px;height:1px;"></div>
<svg class="a" style="left:649px;top:708px" width="12" height="12" viewBox="0 0 12 12"><circle cx="6" cy="6" r="6" fill="#6aa5f0"/><path d="M2.8 6.3 H9.2 M6 3 V9.5" stroke="#fff" stroke-width="0.9"/></svg>
<div class="a lbl" style="left:665px;top:707px;color:#5e9df0">添加</div>
<div class="a " style="left:1389px;top:689px;width:230px;height:81px;background:#f0f0f0"></div>
<div class="a lbl" style="left:1409px;top:693.5px;font-size:14px;line-height:18px">订单金额</div>
<div class="a " style="left:1484px;top:691.5px;font-size:18px;line-height:22px;color:#333">0.00</div>
<div class="a lbl" style="left:1409px;top:720.5px;font-size:14px;line-height:18px">随单订金</div>
<div class="a " style="left:1484px;top:718.5px;font-size:18px;line-height:22px;color:#333">0.00</div>
<div class="a lbl" style="left:1409px;top:747.5px;font-size:14px;line-height:18px">剩余金额</div>
<div class="a " style="left:1484px;top:745.5px;font-size:18px;line-height:22px;color:#f00">0.00</div>
<div class="a " style="left:4px;top:783px;width:1635px;height:42px;background:#fff;box-shadow:0 0 7px rgba(0,0,0,0.10)"></div>
<div class="a lbl" style="left:24px;top:802px;color:#555">本单上欠(保存时)</div>
<div class="a " style="left:124px;top:800px;font-size:15px;line-height:20px;font-weight:bold;color:#111">0.00</div>
<div class="a lbl" style="left:194px;top:802px;color:#555">本单欠款</div>
<svg class="a" style="left:244px;top:804px" width="12" height="12" viewBox="0 0 12 12"><circle cx="6" cy="6" r="5.3" fill="none" stroke="#666" stroke-width="1.1"/><path d="M4.2 4.6 Q4.2 2.9 6 2.9 Q7.8 2.9 7.8 4.5 Q7.8 5.5 6.6 6 Q6 6.3 6 7.3" fill="none" stroke="#666" stroke-width="1.1"/><circle cx="6" cy="9" r="0.7" fill="#666"/></svg>
<div class="a " style="left:264px;top:800px;font-size:15px;line-height:20px;font-weight:bold;color:#111">0.00</div>
<div class="a lbl" style="left:315px;top:802px;color:#555">此后应收</div>
<svg class="a" style="left:365px;top:804px" width="12" height="12" viewBox="0 0 12 12"><circle cx="6" cy="6" r="5.3" fill="none" stroke="#666" stroke-width="1.1"/><path d="M4.2 4.6 Q4.2 2.9 6 2.9 Q7.8 2.9 7.8 4.5 Q7.8 5.5 6.6 6 Q6 6.3 6 7.3" fill="none" stroke="#666" stroke-width="1.1"/><circle cx="6" cy="9" r="0.7" fill="#666"/></svg>
<div class="a " style="left:385px;top:800px;font-size:15px;line-height:20px;font-weight:bold;color:#111">0.00</div>
<svg class="a" style="left:1053px;top:802px" width="14" height="14" viewBox="0 0 14 14"><circle cx="7" cy="7" r="6.4" fill="none" stroke="#aaa" stroke-width="1"/><path d="M4 5.5 H10 V10 H4 Z M5.3 5.5 V4.5 Q5.3 3.4 7 3.4 Q8.7 3.4 8.7 4.5 V5.5" fill="none" stroke="#aaa" stroke-width="0.9"/></svg>
<div class="a lbl" style="left:1070px;top:801px;font-size:13px;line-height:17px">商品种类:</div>
<div class="a " style="left:1134px;top:800px;font-size:15px;line-height:19px;color:#ff7a45">0</div>
<div class="a lbl" style="left:1148px;top:801px;font-size:13px;line-height:17px;color:#555">种</div>
<div class="a " style="left:1219px;top:791px;width:82px;height:40px;border:1px solid #c4c4c4;border-radius:3px;background:#fff;font-size:16px;line-height:36px;text-align:center;color:#333">放弃</div>
<div class="a " style="left:1313px;top:790px;width:149px;height:40px;border:1px solid #6aa5f0;border-radius:3px;background:#fff"></div>
<div class="a " style="left:1347px;top:798px;font-size:16px;line-height:20px;color:#6aa5f0">保存草稿</div>
<svg class="a" style="left:1417px;top:805px" width="11" height="7" viewBox="0 0 11 7"><polyline points="0.7,6.3 5.5,1.2 10.3,6.3" fill="none" stroke="#6aa5f0" stroke-width="1.3"/></svg>
<div class="a " style="left:1475px;top:790px;width:142px;height:40px;background:#6aa5f0;border-radius:3px"></div>
<div class="a " style="left:1498px;top:798px;font-size:16px;line-height:20px;color:#fff;letter-spacing:1px">保存&amp;新增</div>
<svg class="a" style="left:1583px;top:805px" width="11" height="7" viewBox="0 0 11 7"><polyline points="0.7,6.3 5.5,1.2 10.3,6.3" fill="none" stroke="#fff" stroke-width="1.3"/></svg>
<div class="a " style="left:1624px;top:153px;width:30px;height:332px;box-shadow:-3px 0 8px rgba(0,0,0,0.10)"></div>
<div class="a " style="left:1624px;top:153px;width:30px;height:35px;background:#fff"></div>
<div class="a " style="left:1624px;top:188px;width:30px;height:4px;background:#eceef2"></div>
<div class="a " style="left:1624px;top:192px;width:30px;height:253px;background:#fff"></div>
<div class="a " style="left:1624px;top:372px;width:30px;height:1px;background:#e4e4e4"></div>
<div class="a " style="left:1624px;top:445px;width:30px;height:4px;background:#eceef2"></div>
<div class="a " style="left:1624px;top:449px;width:30px;height:36px;background:#5b9cf2"></div>
<svg class="a" style="left:1633px;top:162px" width="18" height="19" viewBox="0 0 18 19"><rect x="0.5" y="0.5" width="17" height="18" rx="2.5" fill="none" stroke="#444" stroke-width="1"/><path d="M12.5 17.5 L17.5 12.5" stroke="#444" stroke-width="1" fill="none"/></svg>
<div class="a " style="left:1633px;top:163px;width:18px;font-size:12px;line-height:17px;text-align:center;font-weight:300;color:#444">草</div>
<svg class="a" style="left:1633px;top:200px" width="18" height="21" viewBox="0 0 18 21"><path d="M9 0.6 L17.4 3.6 V11 Q17.4 17 9 20.4 Q0.6 17 0.6 11 V3.6 Z" fill="none" stroke="#444" stroke-width="1"/></svg>
<div class="a " style="left:1633px;top:202px;width:18px;font-size:12px;line-height:16px;text-align:center;font-weight:300;color:#444">价</div>
<svg class="a" style="left:1633px;top:237px" width="18" height="19" viewBox="0 0 18 19"><rect x="0.5" y="0.5" width="17" height="18" rx="2.5" fill="none" stroke="#444" stroke-width="1"/></svg>
<div class="a " style="left:1633px;top:238px;width:18px;font-size:12px;line-height:17px;text-align:center;font-weight:300;color:#444">库</div>
<svg class="a" style="left:1631px;top:272px" width="22" height="22" viewBox="0 0 22 22"><g fill="none" stroke="#444" stroke-width="1"><path d="M11.2 1.6 A8.8 8.8 0 0 0 3.8 15.6"/><path d="M9.4 18.8 A8.8 8.8 0 0 0 17.6 4.6"/></g><g fill="#444"><polygon points="2,14.6 6,15 3.4 18"/><polygon points="15.2,3.4 19.4,2.6 18.6,6.6"/></g></svg>
<div class="a " style="left:1633px;top:274px;width:18px;font-size:12px;line-height:16px;text-align:center;font-weight:300;color:#444">历</div>
<svg class="a" style="left:1633px;top:309px" width="19" height="19" viewBox="0 0 19 19"><circle cx="9.25" cy="9.25" r="8.6" fill="none" stroke="#444" stroke-width="1"/></svg>
<div class="a " style="left:1633px;top:310px;width:18px;font-size:12px;line-height:16px;text-align:center;font-weight:300;color:#444">欠</div>
<svg class="a" style="left:1633px;top:345px" width="18" height="19" viewBox="0 0 18 19"><rect x="0.5" y="0.5" width="17" height="18" rx="2.5" fill="none" stroke="#444" stroke-width="1"/></svg>
<div class="a " style="left:1633px;top:346px;width:18px;font-size:12px;line-height:17px;text-align:center;font-weight:300;color:#444">券</div>
<svg class="a" style="left:1633px;top:382px" width="18" height="18" viewBox="0 0 18 18"><path d="M10.5 5.5 L4.2 11.8 Q3 13 4.2 14.2 Q5.4 15.4 6.6 14.2 L14.6 6.2 Q16.8 4 14.6 1.8 Q12.4 -0.4 10.2 1.8 L2.2 9.8 Q-0.6 12.6 2.2 15.4 Q5 18.2 7.8 15.4 L13.5 9.7" fill="none" stroke="#444" stroke-width="1.1"/></svg>
<svg class="a" style="left:1632px;top:418px" width="20" height="19" viewBox="0 0 20 19"><polygon points="10,0.8 12.6,6.7 19,7.2 14.1,11.4 15.6,17.8 10,14.4 4.4,17.8 5.9,11.4 1,7.2 7.4,6.7" fill="none" stroke="#444" stroke-width="1"/></svg>
<svg class="a" style="left:1631px;top:457px" width="21" height="21" viewBox="0 0 21 21"><rect x="1" y="1" width="19" height="19" rx="2.5" fill="none" stroke="#fff" stroke-width="1.6"/><path d="M11.5 9.5 L16.5 4.5 M12.5 4.5 H16.5 V8.5 M9.5 11.5 L4.5 16.5 M4.5 12.5 V16.5 H8.5" fill="none" stroke="#fff" stroke-width="1.5"/></svg>
<svg class="a" style="left:1211px;top:24px" width="12" height="13" viewBox="0 0 12 13"><g fill="none" stroke="#7aa7f5" stroke-width="1"><path d="M1 12.5 V2.5 L6.5 0.8 V12.5 Z"/><path d="M6.5 4 L11 5 V12.5 H6.5"/><path d="M3 4.5 V8 M4.6 4.5 V8 M2.6 10 H5 M8.5 7 H9.5 M8.5 9.5 H9.5"/></g></svg>
<svg class="a" style="left:1275px;top:24px" width="12" height="13" viewBox="0 0 12 13"><circle cx="6" cy="6.5" r="5.5" fill="none" stroke="#7aa7f5" stroke-width="1"/><path d="M3.5 5 L5.5 5 M3.5 7 L8 7 M6 4 L6 9 Q6 10 7.5 10 L8.5 10" fill="none" stroke="#7aa7f5" stroke-width="0.9"/></svg>
<svg class="a" style="left:1352px;top:24px" width="14" height="13" viewBox="0 0 14 13"><g fill="none" stroke="#c4c4c4" stroke-width="1.2"><path d="M3.5 4 V1 H10.5 V4"/><path d="M3 10 H1.2 Q0.6 10 0.6 9.4 V5 Q0.6 4 1.6 4 H12.4 Q13.4 4 13.4 5 V9.4 Q13.4 10 12.8 10 H11"/><rect x="3.5" y="7.5" width="7" height="5"/></g></svg>
<svg class="a" style="left:1411px;top:25px" width="11" height="11" viewBox="0 0 11 11"><g fill="none" stroke="#7aa7f5" stroke-width="1.1"><rect x="0.6" y="0.6" width="3.8" height="3.8" rx="1.4"/><rect x="6.6" y="0.6" width="3.8" height="3.8" rx="1.4"/><rect x="0.6" y="6.6" width="3.8" height="3.8" rx="1.4"/><rect x="6.6" y="6.6" width="3.8" height="3.8" rx="1.4"/></g></svg>
<svg class="a" style="left:1463px;top:24px" width="10" height="13" viewBox="0 0 10 13"><rect x="0.5" y="0.5" width="9" height="12" rx="1" fill="none" stroke="#7aa7f5" stroke-width="1"/><rect x="2" y="2" width="4" height="4" fill="#7aa7f5" opacity="0.7"/><circle cx="7" cy="8.5" r="2" fill="none" stroke="#7aa7f5" stroke-width="0.8"/></svg>
<svg class="a" style="left:1540px;top:24px" width="9" height="13" viewBox="0 0 9 13"><polygon points="8,0.5 8,12.5 0.5,6.5" fill="#c0c0c0"/></svg>
<svg class="a" style="left:1564px;top:24px" width="9" height="13" viewBox="0 0 9 13"><polygon points="1,0.5 1,12.5 8.5,6.5" fill="#c0c0c0"/></svg>
<svg class="a" style="left:1586px;top:24px" width="15" height="12" viewBox="0 0 15 12"><path d="M1 1.5 H14 M1 6 H14 M1 10.5 H9" stroke="#fff" stroke-width="1.5"/></svg>
<svg class="a" style="left:1613px;top:24px" width="16" height="12" viewBox="0 0 16 12"><g fill="none" stroke="#777" stroke-width="1"><rect x="0.5" y="0.5" width="4" height="4.5"/><rect x="0.5" y="7" width="4" height="4.5"/></g><path d="M7 1.5 H14 M7 5.5 H14 M7 10.5 H14" stroke="#aaa" stroke-width="1.2"/></svg>
<svg class="a" style="left:1579px;top:68px" width="12" height="12" viewBox="0 0 14 14"><g fill="none" stroke="#6aa5f0" stroke-width="1.3"><path d="M7.00 0.45 L7.34 0.51 L7.67 0.67 L7.96 0.92 L8.23 1.24 L8.45 1.59 L8.64 1.95 L8.81 2.29 L8.97 2.59 L9.13 2.82 L9.32 2.97 L9.56 3.06 L9.84 3.09 L10.17 3.08 L10.55 3.06 L10.96 3.04 L11.38 3.06 L11.79 3.12 L12.15 3.26 L12.45 3.46 L12.67 3.73 L12.79 4.05 L12.82 4.41 L12.75 4.79 L12.61 5.18 L12.41 5.55 L12.19 5.90 L11.98 6.21 L11.80 6.49 L11.69 6.75 L11.65 7.00 L11.69 7.25 L11.80 7.51 L11.98 7.79 L12.19 8.10 L12.41 8.45 L12.61 8.82 L12.75 9.21 L12.82 9.59 L12.79 9.95 L12.67 10.27 L12.45 10.54 L12.15 10.74 L11.79 10.88 L11.38 10.94 L10.96 10.96 L10.55 10.94 L10.17 10.92 L9.84 10.91 L9.56 10.94 L9.32 11.03 L9.13 11.18 L8.97 11.41 L8.81 11.71 L8.64 12.05 L8.45 12.41 L8.23 12.76 L7.96 13.08 L7.67 13.33 L7.34 13.49 L7.00 13.55 L6.66 13.49 L6.33 13.33 L6.04 13.08 L5.77 12.76 L5.55 12.41 L5.36 12.05 L5.19 11.71 L5.03 11.41 L4.87 11.18 L4.68 11.03 L4.44 10.94 L4.16 10.91 L3.83 10.92 L3.45 10.94 L3.04 10.96 L2.62 10.94 L2.21 10.88 L1.85 10.74 L1.55 10.54 L1.33 10.28 L1.21 9.95 L1.18 9.59 L1.25 9.21 L1.39 8.82 L1.59 8.45 L1.81 8.10 L2.02 7.79 L2.20 7.51 L2.31 7.25 L2.35 7.00 L2.31 6.75 L2.20 6.49 L2.02 6.21 L1.81 5.90 L1.59 5.55 L1.39 5.18 L1.25 4.79 L1.18 4.41 L1.21 4.05 L1.33 3.72 L1.55 3.46 L1.85 3.26 L2.21 3.12 L2.62 3.06 L3.04 3.04 L3.45 3.06 L3.83 3.08 L4.16 3.09 L4.44 3.06 L4.68 2.97 L4.87 2.82 L5.03 2.59 L5.19 2.29 L5.36 1.95 L5.55 1.59 L5.77 1.24 L6.04 0.92 L6.33 0.67 L6.66 0.51 L7.00 0.45Z"/><circle cx="7" cy="7" r="2"/></g></svg>
<div class="a " style="left:1595px;top:66px;font-size:12px;line-height:16px;color:#6aa5f0">设置</div>
<svg class="a" style="left:1579px;top:97px" width="12" height="12" viewBox="0 0 12 12"><path d="M0 6 H12 M6 0 V12" stroke="#6aa5f0" stroke-width="1.2"/></svg>
<div class="a " style="left:1595px;top:95px;font-size:12px;line-height:16px;color:#6aa5f0">物流</div>
</body></html>
